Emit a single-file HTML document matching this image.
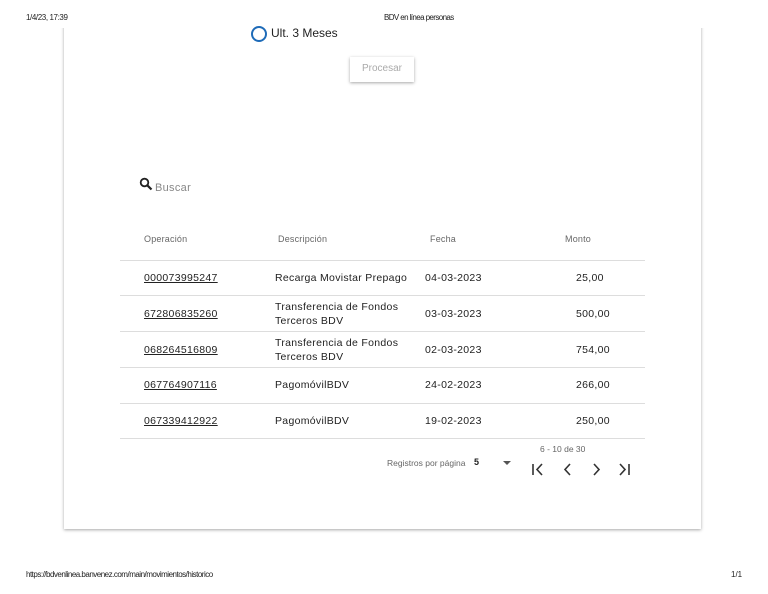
<!DOCTYPE html>
<html><head><meta charset="utf-8"><style>
body{margin:0;width:768px;height:594px;background:#fff;position:relative;font-family:"Liberation Sans",sans-serif;color:#222;overflow:hidden}
.a{position:absolute;white-space:nowrap}
.card{position:absolute;left:64px;top:24px;width:637px;height:505px;background:#fff;box-shadow:0 1px 3px rgba(0,0,0,.35)}
.hl{position:absolute;left:120px;width:525px;height:1px;background:#ddd}
.th{font-size:9px;color:#666;letter-spacing:.2px}
.td{font-size:10.5px;color:#222;letter-spacing:.3px}
.lnk{text-decoration:underline}
</style></head><body>
<div class="card"></div>
<div style="position:absolute;left:0;top:0;width:768px;height:28px;background:#fff"></div>
<div class="a" style="left:26px;top:13px;font-size:8px;letter-spacing:-.4px">1/4/23, 17:39</div>
<div class="a" style="left:384px;top:13px;font-size:8px;letter-spacing:-.6px">BDV en línea personas</div>
<div class="a" style="left:251px;top:26px;width:12px;height:12px;border:2px solid #1e6bb8;border-radius:50%"></div>
<div class="a" style="left:271px;top:26px;font-size:12px">Ult. 3 Meses</div>
<div class="a" style="left:350px;top:57px;width:64px;height:25px;box-shadow:0 1px 3px rgba(0,0,0,.35);font-size:10px;color:#aaa;text-align:center;line-height:24px">Procesar</div>
<svg class="a" style="left:139px;top:177px" width="14" height="14" viewBox="0 0 14 14"><circle cx="5.5" cy="5.5" r="3.8" fill="none" stroke="#222" stroke-width="1.8"/><path d="M8.3 8.3L12.5 12.5" stroke="#222" stroke-width="2.2"/></svg>
<div class="a" style="left:155px;top:182px;font-size:11px;color:#888;letter-spacing:.3px">Buscar</div>
<div class="a th" style="left:144px;top:234px">Operación</div>
<div class="a th" style="left:278px;top:234px">Descripción</div>
<div class="a th" style="left:430px;top:234px">Fecha</div>
<div class="a th" style="left:565px;top:234px">Monto</div>
<div class="hl" style="top:260px"></div>
<div class="hl" style="top:295px"></div>
<div class="hl" style="top:331px"></div>
<div class="hl" style="top:367px"></div>
<div class="hl" style="top:403px"></div>
<div class="hl" style="top:438px"></div>
<div class="a td lnk" style="left:144px;top:272px">000073995247</div>
<div class="a td" style="left:275px;top:272px">Recarga Movistar Prepago</div>
<div class="a td" style="left:425px;top:272px">04-03-2023</div>
<div class="a td" style="left:576px;top:272px">25,00</div>
<div class="a td lnk" style="left:144px;top:308px">672806835260</div>
<div class="a td" style="left:275px;top:300px;line-height:14px">Transferencia de Fondos<br>Terceros BDV</div>
<div class="a td" style="left:425px;top:308px">03-03-2023</div>
<div class="a td" style="left:576px;top:308px">500,00</div>
<div class="a td lnk" style="left:144px;top:344px">068264516809</div>
<div class="a td" style="left:275px;top:336px;line-height:14px">Transferencia de Fondos<br>Terceros BDV</div>
<div class="a td" style="left:425px;top:344px">02-03-2023</div>
<div class="a td" style="left:576px;top:344px">754,00</div>
<div class="a td lnk" style="left:144px;top:379px">067764907116</div>
<div class="a td" style="left:275px;top:379px">PagomóvilBDV</div>
<div class="a td" style="left:425px;top:379px">24-02-2023</div>
<div class="a td" style="left:576px;top:379px">266,00</div>
<div class="a td lnk" style="left:144px;top:415px">067339412922</div>
<div class="a td" style="left:275px;top:415px">PagomóvilBDV</div>
<div class="a td" style="left:425px;top:415px">19-02-2023</div>
<div class="a td" style="left:576px;top:415px">250,00</div>
<div class="a" style="left:540px;top:444px;font-size:8.5px;color:#666">6 - 10 de 30</div>
<div class="a" style="left:387px;top:458px;font-size:8.5px;color:#666">Registros por página</div>
<div class="a" style="left:474px;top:457px;font-size:9px;color:#222;font-weight:bold">5</div>
<div class="a" style="left:503px;top:461px;width:0;height:0;border-left:4px solid transparent;border-right:4px solid transparent;border-top:4px solid #555"></div>
<svg class="a" style="left:528px;top:462px" width="110" height="16" viewBox="0 0 110 16"><g fill="none" stroke="#333" stroke-width="1.6"><path d="M5 2v11M14 2l-5 5.5 5 5.5"/><path d="M42 2l-5 5.5 5 5.5"/><path d="M66 2l5 5.5-5 5.5"/><path d="M92 2l5 5.5-5 5.5M101 2v11"/></g></svg>
<div class="a" style="left:26px;top:570px;font-size:8px;letter-spacing:-.5px">https://bdvenlinea.banvenez.com/main/movimientos/historico</div>
<div class="a" style="left:731px;top:570px;font-size:8px">1/1</div>
</body></html>
